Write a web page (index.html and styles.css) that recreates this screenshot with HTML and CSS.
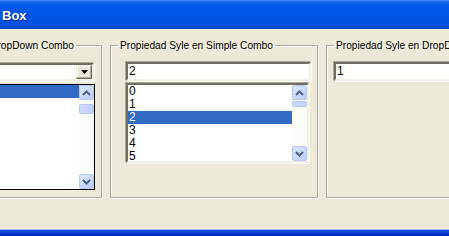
FILE: index.html
```html
<!DOCTYPE html>
<html lang="es">
<head>
  <meta charset="UTF-8" />
  <title>Combo Box</title>
  <link rel="stylesheet" href="styles.css">
</head>
<body>
  <div class="window">
    <div class="titlebar"><span class="title">Box</span></div>

    <div class="client">
      <!-- DropDown List -->
      <fieldset class="group g1">
        <legend>Propiedad Syle en DropDown Combo</legend>
        <div class="group-body">
          <div class="combo">
            <span class="combo-text"></span>
            <span class="drop-btn">
              <svg width="7" height="4" viewBox="0 0 7 4"><polygon points="0,0 7,0 3.5,4" fill="#000"/></svg>
            </span>
          </div>
          <div class="listbox plain tall">
            <div class="items">
              <div class="item sel"></div>
            </div>
            <div class="vscroll">
              <span class="sbtn"><svg width="9" height="6" viewBox="0 0 9 6"><polyline points="1,5 4.5,1.5 8,5" fill="none" stroke="#4D6185" stroke-width="2"/></svg></span>
              <span class="track"><span class="thumb t1"></span></span>
              <span class="sbtn"><svg width="9" height="6" viewBox="0 0 9 6"><polyline points="1,1 4.5,4.5 8,1" fill="none" stroke="#4D6185" stroke-width="2"/></svg></span>
            </div>
          </div>
        </div>
      </fieldset>

      <!-- Simple Combo -->
      <fieldset class="group g2">
        <legend>Propiedad Syle en Simple Combo</legend>
        <div class="group-body">
          <div class="edit w-simple">2</div>
          <div class="listbox sunken short">
            <div class="items">
              <div class="item">0</div>
              <div class="item">1</div>
              <div class="item sel">2</div>
              <div class="item">3</div>
              <div class="item">4</div>
              <div class="item">5</div>
            </div>
            <div class="vscroll">
              <span class="sbtn"><svg width="9" height="6" viewBox="0 0 9 6"><polyline points="1,5 4.5,1.5 8,5" fill="none" stroke="#4D6185" stroke-width="2"/></svg></span>
              <span class="track"><span class="thumb t2"></span></span>
              <span class="sbtn"><svg width="9" height="6" viewBox="0 0 9 6"><polyline points="1,1 4.5,4.5 8,1" fill="none" stroke="#4D6185" stroke-width="2"/></svg></span>
            </div>
          </div>
        </div>
      </fieldset>

      <!-- DropDown Combo -->
      <fieldset class="group g3">
        <legend>Propiedad Syle en DropDown Combo</legend>
        <div class="group-body">
          <div class="edit w-drop">1</div>
        </div>
      </fieldset>
    </div>

    <div class="frame-bottom"></div>
  </div>
</body>
</html>
```

FILE: styles.css
```css
body {
  margin: 0;
  background-color: #ECE9D8;
  font-family: "Liberation Sans", Arial, sans-serif;
  font-size: 10.2px;
  overflow: hidden;
}

.window {
  width: 449px;
  height: 236px;
  display: flex;
  flex-direction: column;
  overflow: hidden;
}

.titlebar {
  height: 29px;
  flex: none;
  background: linear-gradient(#4A90F8 0, #1466EE 2px, #0058EC 6px, #0055E5 18px, #0050DC 25px, #0046C6 29px);
  display: flex;
  align-items: center;
}

.title {
  color: #fff;
  font-weight: bold;
  font-size: 13px;
  margin-left: 2px;
  margin-top: 1px;
  text-shadow: 1px 1px 0 #0A2A8A;
}

.client {
  flex: 1;
  display: flex;
  gap: 8px;
  padding-top: 10px;
  border-bottom: 1px solid #F4F2E8;
}

/* group boxes */
.group {
  box-sizing: border-box;
  flex: none;
  width: 208px;
  height: 159px;
  margin: 0;
  padding: 0;
  border: 1px solid #ACA899;
  box-shadow: inset 1px 1px 0 #fff, 1px 1px 0 #fff;
  min-width: 0;
}

.group legend {
  margin-left: 7px;
  padding: 0 2px;
  line-height: 13px;
  color: #000;
  white-space: nowrap;
}

.group-body {
  padding: 10px 0 0 15px;
}

.g1 {
  margin-left: -106px;
}

.g3 {
  width: 140px;
}

.g3 .group-body {
  padding-left: 7px;
}

/* edit boxes */
.edit {
  box-sizing: border-box;
  height: 19px;
  background: #fff;
  border-style: solid;
  border-width: 2px;
  border-color: #716F64 #F1EFE2 #F1EFE2 #716F64;
  box-shadow: -1px -1px 0 #ACA899, 1px 1px 0 #fff;
  padding-left: 1px;
  line-height: 15px;
  font-size: 12px;
}

.w-simple {
  width: 185px;
}

.w-drop {
  width: 130px;
}

/* dropdown list combo */
.combo {
  box-sizing: border-box;
  width: 184px;
  height: 18px;
  margin-top: 1px;
  background: #fff;
  border-style: solid;
  border-width: 2px;
  border-color: #716F64 #F1EFE2 #F1EFE2 #716F64;
  box-shadow: -1px -1px 0 #ACA899, 1px 1px 0 #fff;
  display: flex;
  justify-content: flex-end;
}

.drop-btn {
  box-sizing: border-box;
  width: 16px;
  height: 14px;
  background: #ECE9D8;
  border-style: solid;
  border-width: 1px;
  border-color: #F1EFE2 #716F64 #716F64 #F1EFE2;
  box-shadow: inset -1px -1px 0 #ACA899, inset 1px 1px 0 #fff;
  display: flex;
  align-items: center;
  justify-content: center;
}

/* list boxes */
.listbox {
  box-sizing: border-box;
  background: #fff;
  display: flex;
  margin-top: 2px;
}

.listbox.plain {
  width: 185px;
  border: 1px solid #000;
}

.listbox.sunken {
  width: 183px;
  border-style: solid;
  border-width: 2px;
  border-color: #716F64 #F1EFE2 #F1EFE2 #716F64;
  box-shadow: -1px -1px 0 #ACA899, 1px 1px 0 #fff;
}

.tall {
  height: 106px;
  margin-top: 3px;
}

.short {
  height: 80px;
}

.items {
  flex: 1;
  overflow: hidden;
}

.item {
  height: 13px;
  line-height: 12px;
  padding-left: 1px;
  font-size: 12px;
  color: #000;
}

.item.sel {
  background: #316AC5;
  color: #fff;
}

/* scrollbar */
.vscroll {
  width: 15px;
  flex: none;
  display: flex;
  flex-direction: column;
  background: #FBFBF8;
}

.sbtn {
  box-sizing: border-box;
  height: 15px;
  flex: none;
  background: linear-gradient(135deg, #DCE6FD, #BACCF7);
  border: 1px solid #B7C9F1;
  border-radius: 2px;
  display: flex;
  align-items: center;
  justify-content: center;
}

.track {
  flex: 1;
  display: flex;
  flex-direction: column;
}

.thumb {
  box-sizing: border-box;
  background: linear-gradient(90deg, #CCDAFB, #C1D2F9);
  border: 1px solid #B7C9F1;
  border-radius: 2px;
}

.t1 {
  height: 10px;
  margin-top: 4px;
}

.t2 {
  height: 6px;
  margin-top: 1px;
}

.frame-bottom {
  height: 7px;
  flex: none;
  background: linear-gradient(#8FB0F4 0, #8FB0F4 1px, #1A56E4 1px, #0A3DDA 4px, #0020A8 7px);
}
```
